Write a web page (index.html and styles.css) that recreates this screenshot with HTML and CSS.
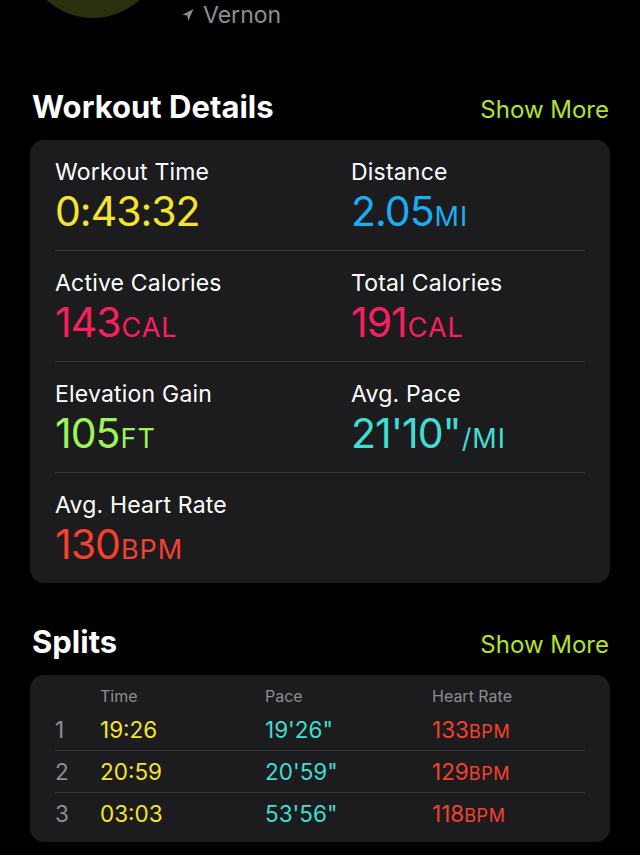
FILE: index.html
```html
<!DOCTYPE html>
<html lang="en">
<head>
    <meta charset="UTF-8">
    <meta name="viewport" content="width=device-width, initial-scale=1.0">
    <title>Workout</title>
    <link rel="stylesheet" href="styles.css">
</head>
<body>
    <div class="hero">
        <div class="avatar"></div>
        <div class="place">
            <svg class="arrow" width="12" height="14" viewBox="0 0 12 14">
                <path d="M11.5 1 L0.5 6.8 L5.4 7.6 L6.2 13 Z" fill="#8d8d92"/>
            </svg>
            <span>Vernon</span>
        </div>
    </div>

    <div class="section-head">
        <h2>Workout Details</h2>
        <a class="more" href="#">Show More</a>
    </div>

    <div class="card details">
        <div class="row">
            <div class="stat">
                <div class="label">Workout Time</div>
                <div class="value yellow">0:43:32</div>
            </div>
            <div class="stat">
                <div class="label">Distance</div>
                <div class="value blue">2.05<span class="unit">MI</span></div>
            </div>
        </div>
        <div class="row">
            <div class="stat">
                <div class="label">Active Calories</div>
                <div class="value pink">143<span class="unit">CAL</span></div>
            </div>
            <div class="stat">
                <div class="label">Total Calories</div>
                <div class="value pink">191<span class="unit">CAL</span></div>
            </div>
        </div>
        <div class="row">
            <div class="stat">
                <div class="label">Elevation Gain</div>
                <div class="value green">105<span class="unit">FT</span></div>
            </div>
            <div class="stat">
                <div class="label">Avg. Pace</div>
                <div class="value teal">21'10"<span class="unit">/MI</span></div>
            </div>
        </div>
        <div class="row">
            <div class="stat">
                <div class="label">Avg. Heart Rate</div>
                <div class="value red">130<span class="unit">BPM</span></div>
            </div>
        </div>
    </div>

    <div class="section-head splits-head">
        <h2>Splits</h2>
        <a class="more" href="#">Show More</a>
    </div>

    <div class="card splits">
        <div class="split header">
            <span></span>
            <span>Time</span>
            <span>Pace</span>
            <span>Heart Rate</span>
        </div>
        <div class="split">
            <span class="num">1</span>
            <span class="yellow">19:26</span>
            <span class="teal">19'26"</span>
            <span class="red">133<span class="sunit">BPM</span></span>
        </div>
        <div class="split">
            <span class="num">2</span>
            <span class="yellow">20:59</span>
            <span class="teal">20'59"</span>
            <span class="red">129<span class="sunit">BPM</span></span>
        </div>
        <div class="split">
            <span class="num">3</span>
            <span class="yellow">03:03</span>
            <span class="teal">53'56"</span>
            <span class="red">118<span class="sunit">BPM</span></span>
        </div>
    </div>
</body>
</html>
```

FILE: styles.css
```css
body {
    margin: 0;
    background-color: #000;
    color: #fff;
    font-family: Inter, "Liberation Sans", sans-serif;
    overflow: hidden;
}

.hero {
    display: flex;
    height: 40px;
    padding-left: 24px;
}

.avatar {
    width: 138px;
    height: 138px;
    margin-top: -120px;
    border-radius: 50%;
    background-color: #2a2f0e;
    flex-shrink: 0;
}

.place {
    display: flex;
    align-items: center;
    gap: 9px;
    margin-left: 20px;
    height: 29px;
    color: #8d8d92;
    font-size: 23px;
}

.section-head {
    display: flex;
    justify-content: space-between;
    align-items: baseline;
    padding: 48px 31px 0 32px;
    height: 52px;
}

.section-head h2 {
    margin: 0;
    font-size: 31px;
    font-weight: 700;
    letter-spacing: 0;
}

.more {
    color: #b4e32c;
    text-decoration: none;
    font-size: 24px;
}

.card {
    margin: 0 30px;
    background-color: #1c1c1e;
    border-radius: 14px;
}

.details {
    padding: 0 25px;
}

.row {
    display: grid;
    grid-template-columns: 296px 1fr;
    height: 110px;
    border-bottom: 1px solid #38383a;
}

.row:last-child {
    border-bottom: none;
}

.stat {
    padding-top: 17px;
}

.label {
    font-size: 23px;
    line-height: 30px;
    letter-spacing: 0.2px;
}

.value {
    font-size: 41px;
    line-height: 48px;
    letter-spacing: -1px;
}

.unit {
    font-size: 27px;
    letter-spacing: 1px;
    margin-left: 1px;
}

.yellow { color: #f5e42e; }
.blue { color: #1badf3; }
.pink { color: #f9205f; }
.green { color: #9ef35a; }
.teal { color: #41ddd2; }
.red { color: #f5412f; }

.splits-head {
    padding-top: 40px;
    height: 52px;
}

.splits {
    padding: 8px 25px 8px 25px;
}

.split {
    display: grid;
    grid-template-columns: 45px 165px 167px 1fr;
    align-items: center;
    height: 41px;
    font-size: 22.5px;
    border-bottom: 1px solid #38383a;
}

.split:last-child {
    border-bottom: none;
}

.split.header {
    height: 26px;
    font-size: 16px;
    color: #8d8d92;
    border-bottom: none;
}

.num {
    color: #8d8d92;
}

.sunit {
    font-size: 18px;
    letter-spacing: 0.6px;
}
```
